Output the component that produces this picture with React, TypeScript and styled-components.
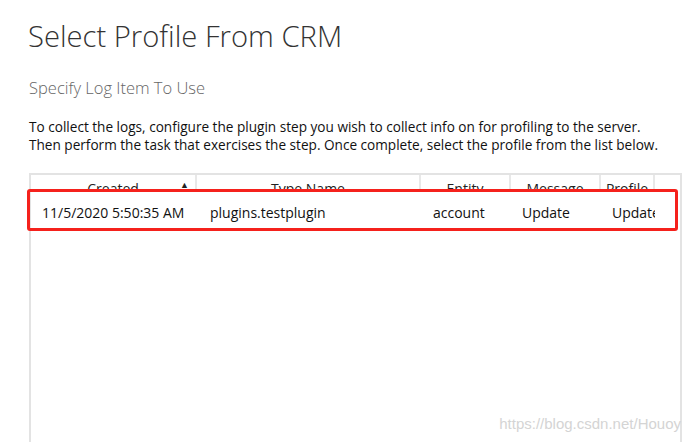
import styled, { createGlobalStyle } from 'styled-components';

const GlobalStyle = createGlobalStyle`
    html, body {
        margin: 0;
        padding: 0;
        background: #ffffff;
    }
    body {
        font-family: "Open Sans", "Noto Sans", sans-serif;
        color: #000;
    }
`

const Page = styled.div`
    position: relative;
    width: 693px;
    height: 442px;
    overflow: hidden;
    padding-left: 29px;
    box-sizing: border-box;
`
const Title = styled.h1`
    margin: 0 0 0 -1px;
    padding-top: 17px;
    font-size: 29.2px;
    font-weight: 300;
    color: #333;
    line-height: 38px;
`
const SubTitle = styled.h2`
    margin: 22px 0 0;
    font-size: 16.5px;
    font-weight: 300;
    color: #666;
    line-height: 22px;
`
const Intro = styled.p`
    margin: 19px 0 0;
    font-size: 13.6px;
    line-height: 18px;
    color: #111;
    white-space: nowrap;
`
const Grid = styled.div`
    margin-top: 19px;
    width: 653px;
    height: 290px;
    border: 2px solid #e3e3e3;
    box-sizing: border-box;
`
const HeaderRow = styled.div`
    display: flex;
    height: 15px;
    overflow: hidden;
`
const HeaderCell = styled.div<{w:number; sorted?:boolean}>`
    width: ${(props)=>props.w}px;
    flex: none;
    box-sizing: border-box;
    border-right: 2px solid #e8e8e8;
    font-size: 14px;
    line-height: 21px;
    padding-top: 3px;
    padding-left: ${(props)=>props.sorted?'15px':'0'};
    display: flex;
    justify-content: center;
    color: #222;
    &:last-child{
        border-right: none;
        flex: 1;
    }
`
const HeaderLabel = styled.span`
    flex: 1;
    text-align: center;
`
const SortArrow = styled.span`
    font-size: 9px;
    line-height: 14px;
    padding-right: 6px;
`
const DataRow = styled.div`
    display: flex;
    height: 42px;
    padding-top: 2px;
    box-sizing: border-box;
    align-items: center;
`
const DataCell = styled.div<{w:number; pad:number}>`
    width: ${(props)=>props.w}px;
    flex: none;
    padding-left: ${(props)=>props.pad}px;
    box-sizing: border-box;
    font-size: 14px;
    white-space: nowrap;
    overflow: hidden;
    color: #111;
`
// red annotation drawn over the selected row
const Highlight = styled.div`
    position: absolute;
    left: 27px;
    top: 189px;
    width: 651px;
    height: 42px;
    border: 3px solid #f5211c;
    border-radius: 3px;
    box-sizing: border-box;
    pointer-events: none;
`
const Watermark = styled.div`
    position: absolute;
    right: 12px;
    bottom: 10px;
    font-family: "Liberation Sans", Arial, sans-serif;
    font-size: 15px;
    color: #d4d4d4;
`

const columns = [
    {name:'Created', w:166},
    {name:'Type Name', w:224},
    {name:'Entity', w:90},
    {name:'Message', w:90},
    {name:'Profile', w:54},
    {name:'', w:25},
];

const row = [
    {text:'11/5/2020 5:50:35 AM', w:166, pad:11},
    {text:'plugins.testplugin', w:224, pad:13},
    {text:'account', w:90, pad:12},
    {text:'Update', w:90, pad:11},
    {text:'Update', w:54, pad:11},
];

export default function App(){
    return (
        <Page>
            <GlobalStyle/>
            <Title>Select Profile From CRM</Title>
            <SubTitle>Specify Log Item To Use</SubTitle>
            <Intro>
                To collect the logs, configure the plugin step you wish to collect info on for profiling to the server.<br/>
                Then perform the task that exercises the step. Once complete, select the profile from the list below.
            </Intro>
            <Grid>
                <HeaderRow>
                    {columns.map((c,i)=>(
                        <HeaderCell key={i} w={c.w} sorted={i===0}>
                            <HeaderLabel>{c.name}</HeaderLabel>
                            {i===0 && <SortArrow>▲</SortArrow>}
                        </HeaderCell>
                    ))}
                </HeaderRow>
                <DataRow>
                    {row.map((c,i)=>(
                        <DataCell key={i} w={c.w} pad={c.pad}>{c.text}</DataCell>
                    ))}
                </DataRow>
            </Grid>
            <Highlight/>
            <Watermark>https://blog.csdn.net/Houoy</Watermark>
        </Page>
    )
}
